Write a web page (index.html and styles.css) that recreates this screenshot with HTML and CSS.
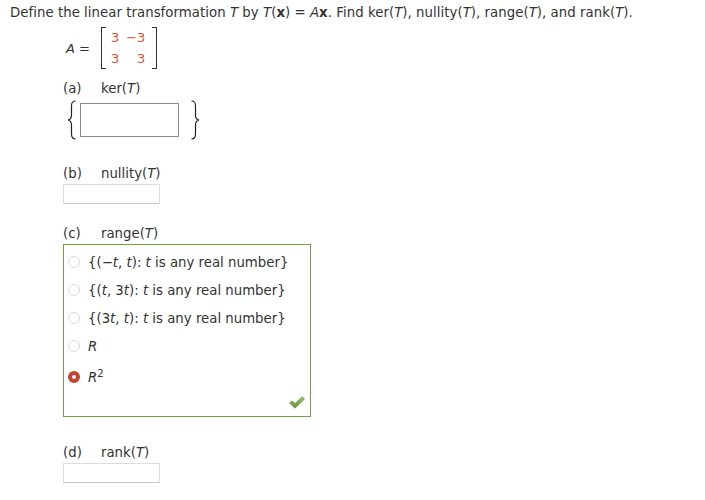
FILE: index.html
```html
<!DOCTYPE html>
<html>
<head>
<meta charset="utf-8">
<link rel="stylesheet" href="styles.css">
</head>
<body>
<div class="page">
  <div class="title">Define the linear transformation <i>T</i> by <i>T</i>(<b>x</b>) = <i>A</i><b>x</b>. Find ker(<i>T</i>), nullity(<i>T</i>), range(<i>T</i>), and rank(<i>T</i>).</div>

  <div class="matrix-row">
    <span class="mlabel"><i>A</i> =</span>
    <span class="bracket left"></span>
    <div class="matrix">
      <span>3</span><span>&minus;3</span>
      <span>3</span><span>3</span>
    </div>
    <span class="bracket right"></span>
  </div>

  <div class="part part-a"><span class="plabel">(a)</span><span>ker(<i>T</i>)</span></div>
  <div class="brace-row">
    <svg class="brace" width="12" height="40" viewBox="0 0 12 40"><path d="M9.5 1 C6 1 5.5 3 5.5 6 L5.5 15 C5.5 18 4.5 19.5 2 20 C4.5 20.5 5.5 22 5.5 25 L5.5 34 C5.5 37 6 39 9.5 39" fill="none" stroke="#222" stroke-width="1.2"/></svg>
    <div class="kerbox"></div>
    <svg class="brace brace-r" width="12" height="40" viewBox="0 0 12 40"><path d="M2.5 1 C6 1 6.5 3 6.5 6 L6.5 15 C6.5 18 7.5 19.5 10 20 C7.5 20.5 6.5 22 6.5 25 L6.5 34 C6.5 37 6 39 2.5 39" fill="none" stroke="#222" stroke-width="1.2"/></svg>
  </div>

  <div class="part part-b"><span class="plabel">(b)</span><span>nullity(<i>T</i>)</span></div>
  <div class="field"></div>

  <div class="part part-c"><span class="plabel">(c)</span><span>range(<i>T</i>)</span></div>
  <div class="choices">
    <div class="opt"><span class="radio"></span><span>{(&minus;<i>t</i>, <i>t</i>): <i>t</i> is any real number}</span></div>
    <div class="opt"><span class="radio"></span><span>{(<i>t</i>, 3<i>t</i>): <i>t</i> is any real number}</span></div>
    <div class="opt"><span class="radio"></span><span>{(3<i>t</i>, <i>t</i>): <i>t</i> is any real number}</span></div>
    <div class="opt"><span class="radio"></span><span><i>R</i></span></div>
    <div class="opt opt-last"><span class="radio checked"></span><span><i>R</i><sup>2</sup></span></div>
    <svg class="check" width="16" height="13" viewBox="0 0 16 13">
      <defs><linearGradient id="g" x1="0" y1="0" x2="0" y2="1"><stop offset="0" stop-color="#9cc46a"/><stop offset="1" stop-color="#5e8f32"/></linearGradient></defs>
      <path d="M0.5 7 L3 4.8 L6 7.6 L13.2 0.8 L15.5 3 L6 12.2 Z" fill="url(#g)" stroke="#5a8a30" stroke-width="0.6"/>
    </svg>
  </div>

  <div class="part part-d"><span class="plabel">(d)</span><span>rank(<i>T</i>)</span></div>
  <div class="field"></div>
</div>
</body>
</html>
```

FILE: styles.css
```css
html, body {
  margin: 0;
  padding: 0;
  background: #fff;
}
body {
  font-family: "DejaVu Sans", Verdana, sans-serif;
  font-size: 13.3px;
  color: #333;
}
.page {
  padding: 5px 0 0 10px;
}
.title {
  line-height: 16px;
  white-space: nowrap;
  letter-spacing: 0.04px;
}
.title b {
  font-weight: bold;
}
.matrix-row {
  display: flex;
  align-items: center;
  margin: 6px 0 0 56px;
  height: 42px;
}
.mlabel {
  margin-right: 11px;
  font-size: 13px;
}
.bracket {
  width: 4px;
  height: 40px;
  border: 1px solid #333;
}
.bracket.left { border-right: none; }
.bracket.right { border-left: none; }
.matrix {
  display: grid;
  grid-template-columns: auto auto;
  column-gap: 7px;
  row-gap: 5px;
  padding: 0 7px 0 5px;
  color: #d9512c;
  font-size: 13px;
  line-height: 16px;
}
.matrix span {
  text-align: right;
}
.part {
  display: flex;
  line-height: 16px;
  margin-left: 53px;
}
.plabel {
  width: 38px;
}
.part-a { margin-top: 12px; }
.brace-row {
  display: flex;
  align-items: center;
  margin: 3px 0 0 56px;
  height: 40px;
}
.kerbox {
  width: 97px;
  height: 32px;
  border: 1px solid #8a8a8a;
  margin-left: 2px;
}
.brace-r {
  margin-left: 10px;
}
.part-b { margin-top: 26px; }
.field {
  margin: 2px 0 0 53px;
  width: 95px;
  height: 18px;
  border: 1px solid #ddd;
  border-bottom-color: #c8c8c8;
}
.part-c { margin-top: 22px; }
.choices {
  position: relative;
  margin: 2px 0 0 53px;
  width: 246px;
  height: 168px;
  border: 1px solid #74a03f;
  padding-top: 3px;
  box-sizing: content-box;
}
.opt {
  display: flex;
  align-items: center;
  height: 28px;
  padding-left: 4px;
}
.opt-last {
  margin-top: 3px;
}
.radio {
  width: 10px;
  height: 10px;
  border: 1px solid #dcdcdc;
  border-radius: 50%;
  margin-right: 8px;
  background: #fff;
  flex: none;
}
.radio.checked {
  width: 4px;
  height: 4px;
  border: 4px solid #c5432b;
  background: #fff;
}
sup {
  font-size: 10px;
  line-height: 0;
  vertical-align: 5px;
}
.check {
  position: absolute;
  right: 5px;
  bottom: 7px;
}
.part-d { margin-top: 28px; }
```
